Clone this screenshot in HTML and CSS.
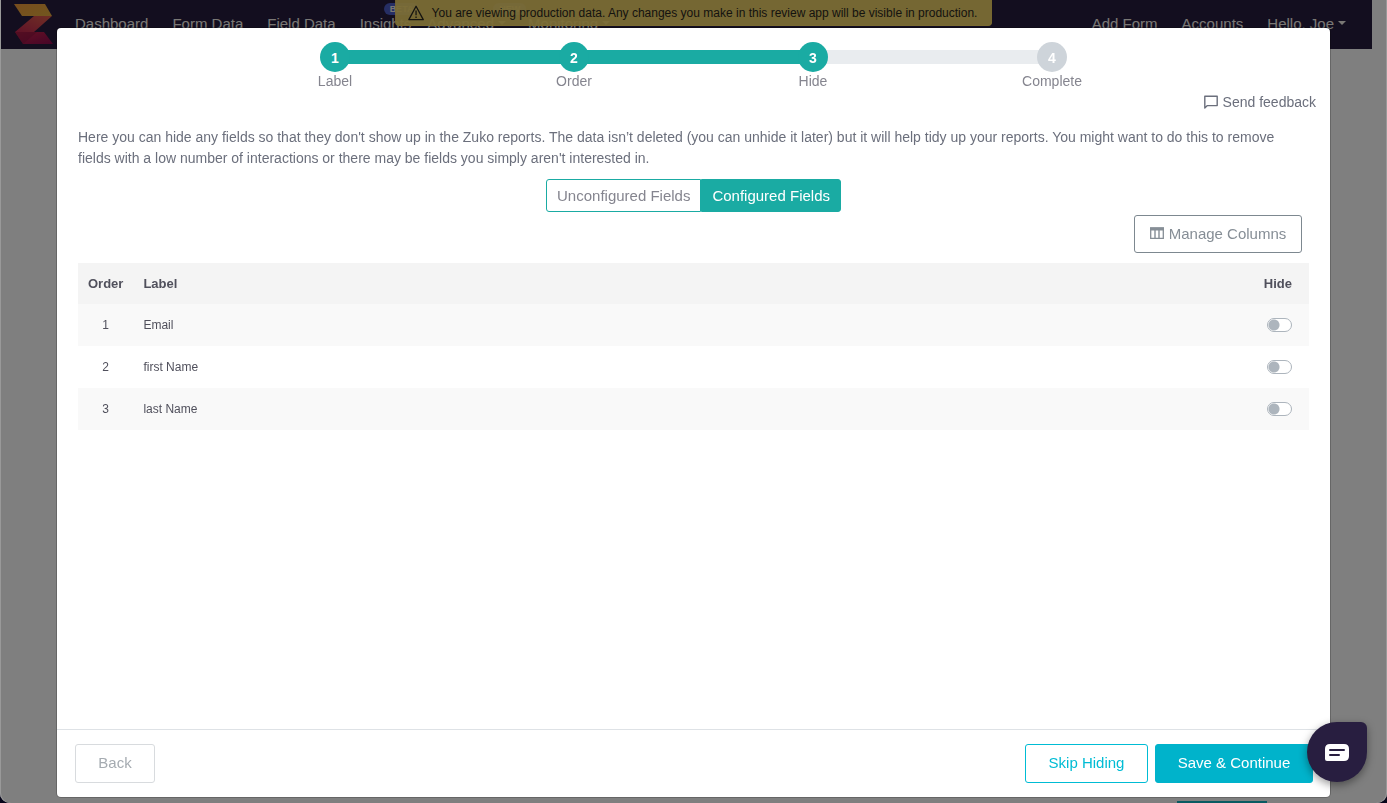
FILE: index.html
```
<!DOCTYPE html>
<html lang="en">
<head>
  <meta charset="UTF-8">
  <meta name="viewport" content="width=device-width, initial-scale=1.0">
  <title>Zuko - Hide Fields</title>
  <link rel="stylesheet" href="styles.css">
</head>
<body>
  <div class="page">
    <nav class="navbar">
      <a href="#" class="logo" aria-label="Zuko">
        <svg width="39" height="40" viewBox="0 0 39 40">
          <defs>
            <linearGradient id="gold" x1="0" y1="0" x2="1" y2="1">
              <stop offset="0" stop-color="#f09a3c"/>
              <stop offset="1" stop-color="#e4ae3e"/>
            </linearGradient>
            <linearGradient id="red" x1="1" y1="0" x2="0" y2="1">
              <stop offset="0" stop-color="#e0604a"/>
              <stop offset="1" stop-color="#c02450"/>
            </linearGradient>
            <linearGradient id="wine" x1="0" y1="0" x2="1" y2="1">
              <stop offset="0" stop-color="#cc2448"/>
              <stop offset="1" stop-color="#8c0a50"/>
            </linearGradient>
          </defs>
          <path d="M0 0H31L38 12H8Z" fill="url(#gold)"/>
          <path d="M20 12H38L20 28H1Z" fill="url(#red)"/>
          <path d="M1 28H30L39 40H9Z" fill="url(#wine)"/>
          <path d="M1 28H23L9 40Z" fill="#861440" opacity=".5"/>
        </svg>
      </a>
      <a href="#">Dashboard</a>
      <a href="#">Form Data</a>
      <a href="#">Field Data</a>
      <a href="#" class="tagged insights">Insights<span class="tag">BETA</span></a>
      <a href="#" class="caret tagged advanced">Advanced<span class="tag tag-right">NEW</span></a>
      <a href="#" class="caret">Monitoring</a>
      <a href="#" class="push">Add Form</a>
      <a href="#">Accounts</a>
      <a href="#" class="caret">Hello, Joe</a>
    </nav>
    <div class="page-bottom">
      <button class="page-btn" aria-label="Configure"></button>
    </div>
    <div class="banner">
      <svg width="16" height="16" viewBox="0 0 16 16" fill="none" stroke="#2b2820" stroke-width="1.3" stroke-linejoin="round">
        <path d="M8 1.2L15.2 14.6H.8Z"/>
        <path d="M8 5.6V10.2M8 11.6V13"/>
      </svg>
      You are viewing production data. Any changes you make in this review app will be visible in production.
    </div>
  </div>

  <div class="overlay">
    <div class="modal" role="dialog" aria-label="Hide fields">
      <div class="modal-body">
        <ol class="steps">
          <li class="done"><span class="num">1</span>Label</li>
          <li class="done"><span class="num">2</span>Order</li>
          <li class="done last-done"><span class="num">3</span>Hide</li>
          <li><span class="num">4</span>Complete</li>
        </ol>

        <a href="#" class="feedback">
          <svg width="14" height="14" viewBox="0 0 14 14" fill="none" stroke="#6b6f7c" stroke-width="1.4" stroke-linejoin="round">
            <path d="M.8 1.2H13.2V10.6H3.4L.8 13Z"/>
          </svg>
          Send feedback
        </a>

        <p class="intro">Here you can hide any fields so that they don't show up in the Zuko reports. The data isn’t deleted (you can unhide it later) but it will help tidy up your reports. You might want to do this to remove fields with a low number of interactions or there may be fields you simply aren't interested in.</p>

        <div class="field-tabs">
          <button>Unconfigured Fields</button>
          <button class="active">Configured Fields</button>
        </div>

        <div class="toolbar">
          <button class="btn btn-columns">
            <svg width="14" height="12" viewBox="0 0 14 12" fill="none" stroke="#868e96">
              <path d="M.7 1H13.3V11.3H.7Z" stroke-width="1.3"/>
              <path d="M0 2H14" stroke-width="3"/>
              <path d="M5 3V11M9 3V11" stroke-width="1.4"/>
            </svg>
            Manage Columns
          </button>
        </div>

        <table class="fields">
          <thead>
            <tr><th class="order">Order</th><th>Label</th><th class="hide">Hide</th></tr>
          </thead>
          <tbody>
            <tr>
              <td class="order">1</td>
              <td><label for="hide-1">Email</label></td>
              <td class="hide"><input type="checkbox" class="switch" id="hide-1"></td>
            </tr>
            <tr>
              <td class="order">2</td>
              <td><label for="hide-2">first Name</label></td>
              <td class="hide"><input type="checkbox" class="switch" id="hide-2"></td>
            </tr>
            <tr>
              <td class="order">3</td>
              <td><label for="hide-3">last Name</label></td>
              <td class="hide"><input type="checkbox" class="switch" id="hide-3"></td>
            </tr>
          </tbody>
        </table>
      </div>

      <div class="modal-footer">
        <button class="btn btn-back">Back</button>
        <button class="btn btn-skip">Skip Hiding</button>
        <button class="btn btn-save">Save &amp; Continue</button>
      </div>
    </div>
  </div>

  <button class="chat" aria-label="Open chat">
    <svg width="24" height="18" viewBox="0 0 24 18">
      <path d="M5 1H19Q24 1 24 6V13Q24 18 19 18H2Q0 18 0 16V6Q0 1 5 1Z" fill="#fff"/>
      <path d="M5 7H19M5 12H14" stroke="#281e40" stroke-width="2" stroke-linecap="round"/>
    </svg>
  </button>
</body>
</html>
```
FILE: styles.css
```
* {
  box-sizing: border-box;
}
body {
  margin: 0;
  background: #07051a;
  font-family: "Helvetica Neue", "Liberation Sans", Arial, sans-serif;
  font-size: 15px;
  color: #6b6f7c;
}
button {
  font-family: inherit;
  font-size: 15px;
  cursor: pointer;
}
a {
  color: inherit;
  text-decoration: none;
}

/* page behind the modal */
.page {
  display: flex;
  flex-direction: column;
  height: 100vh;
  overflow: hidden;
  background: #fff;
  border-radius: 0 0 10px 10px;
}
.navbar {
  display: flex;
  align-items: center;
  gap: 24px;
  height: 49px;
  margin-right: 15px;
  padding: 0 26px 2px 14px;
  background: #261c3e;
  color: #f4f0ea;
  font-size: 15px;
}
.logo {
  display: flex;
  width: 37px;
}
.logo svg {
  flex: none;
}
.tagged {
  position: relative;
}
.insights {
  margin-right: -8px;
}
.advanced {
  margin-right: -2px;
}
.tag {
  position: absolute;
  left: 24px;
  top: -12px;
  padding: 1px 6px;
  border-radius: 8px;
  background: #4c5cc8;
  font-size: 9px;
  font-weight: bold;
}
.tag-right {
  left: 66px;
}
.push {
  margin-left: auto;
}
.caret::after {
  content: "";
  display: inline-block;
  margin-left: 4px;
  vertical-align: 4px;
  border: 4px solid transparent;
  border-top-color: currentColor;
  border-bottom: 0;
}
.page-bottom {
  display: flex;
  justify-content: flex-end;
  margin-top: auto;
  padding-right: 120px;
}
.page-btn {
  width: 90px;
  height: 2px;
  padding: 0;
  border: 0;
  background: #12b4c4;
}
.banner {
  position: absolute;
  top: 0;
  left: 50%;
  transform: translateX(-50%);
  display: flex;
  align-items: center;
  gap: 8px;
  height: 26px;
  padding: 0 14px 0 12px;
  border: 1px solid #f4d460;
  border-top: 0;
  border-radius: 0 0 4px 4px;
  background: rgba(248, 218, 106, 0.94);
  color: #2b2820;
  font-size: 12px;
  white-space: nowrap;
}

/* modal */
.overlay {
  position: fixed;
  inset: 0;
  display: flex;
  padding: 28px 57px 6px;
  border-radius: 0 0 10px 10px;
  background: rgba(0, 0, 0, 0.5);
  box-shadow: inset 1px 0 #999, inset -1px 0 #999;
}
.modal {
  flex: 1;
  display: flex;
  flex-direction: column;
  background: #fff;
  border-radius: 4px;
  box-shadow: 0 0 0 1px rgba(0, 0, 0, 0.2);
}
.modal-body {
  flex: 1;
  padding: 14px 21px;
}
.steps {
  display: flex;
  width: 956px;
  max-width: 100%;
  margin: 0 auto;
  padding: 0;
  list-style: none;
}
.steps li {
  position: relative;
  flex: 1;
  display: flex;
  flex-direction: column;
  align-items: center;
  font-size: 14px;
  line-height: 18px;
  color: #85858f;
}
.steps li:not(:last-child)::before {
  content: "";
  position: absolute;
  left: 50%;
  top: 8px;
  width: 100%;
  height: 14px;
  background: #e9ecef;
}
.steps li.done:not(.last-done)::before {
  background: #1aaba3;
}
.num {
  position: relative;
  z-index: 1;
  width: 30px;
  border-radius: 50%;
  background: #ced4da;
  color: #fff;
  font-weight: bold;
  line-height: 32px;
  height: 30px;
  text-align: center;
}
.done .num {
  background: #1aaba3;
}
.feedback {
  display: flex;
  align-items: center;
  justify-content: flex-end;
  gap: 5px;
  margin: 4px -7px 0 0;
  font-size: 14px;
  line-height: 16px;
}
.intro {
  margin: 17px 0 10px;
  font-size: 14px;
  line-height: 21px;
}
.field-tabs {
  display: flex;
  justify-content: center;
}
.field-tabs button {
  height: 33px;
  padding: 0 10px;
  border: 1px solid #1aaba3;
  border-radius: 3px 0 0 3px;
  background: #fff;
  color: #85858f;
}
.field-tabs .active {
  border-radius: 0 3px 3px 0;
  background: #1aaba3;
  color: #fff;
}
.toolbar {
  display: flex;
  justify-content: flex-end;
  padding: 3px 7px 10px;
}
.btn {
  display: flex;
  align-items: center;
  justify-content: center;
  height: 39px;
  padding: 0 0 2px;
  border: 1px solid;
  border-radius: 3px;
  background: #fff;
}
.btn-columns {
  gap: 5px;
  height: 38px;
  width: 168px;
  border-color: #7d8890;
  color: #868e96;
}
.fields {
  width: 100%;
  border-collapse: collapse;
  color: #50505c;
  font-size: 12px;
}
.fields th,
.fields td {
  height: 42px;
  padding: 0 10px;
  text-align: left;
}
.fields th {
  height: 41px;
  background: #f4f4f4;
  font-size: 13px;
}
.fields tbody tr:nth-child(odd) {
  background: #f9f9f9;
}
.fields .order {
  width: 55px;
  text-align: center;
}
.fields .hide {
  padding-right: 17px;
  text-align: right;
}
.switch {
  appearance: none;
  display: inline-block;
  width: 25px;
  height: 14px;
  margin: 0;
  border: 1px solid #adb5bd;
  border-radius: 7px;
  background: radial-gradient(circle at 6px 6px, #adb5bd 5px, #fff 6px);
  vertical-align: middle;
}
.switch:checked {
  border-color: #1aaba3;
  background: radial-gradient(circle at 17px 6px, #fff 5px, #1aaba3 6px);
}
.modal-footer {
  display: flex;
  gap: 7px;
  padding: 14px 17px 14px 18px;
  border-top: 1px solid #dee2e6;
}
.btn-back {
  width: 80px;
  margin-right: auto;
  border-color: #d8dbde;
  color: #a5abb1;
}
.btn-skip {
  width: 123px;
  color: #00bcd4;
}
.btn-save {
  width: 158px;
  border-color: #00b3cb;
  background: #00b3cb;
  color: #fff;
}

.chat {
  position: fixed;
  right: 20px;
  bottom: 21px;
  display: flex;
  align-items: center;
  justify-content: center;
  width: 60px;
  height: 60px;
  padding: 0;
  border: 0;
  border-radius: 30px 6px 30px 30px;
  background: #281e40;
  box-shadow: 0 3px 8px rgba(0, 0, 0, 0.4);
}
```
